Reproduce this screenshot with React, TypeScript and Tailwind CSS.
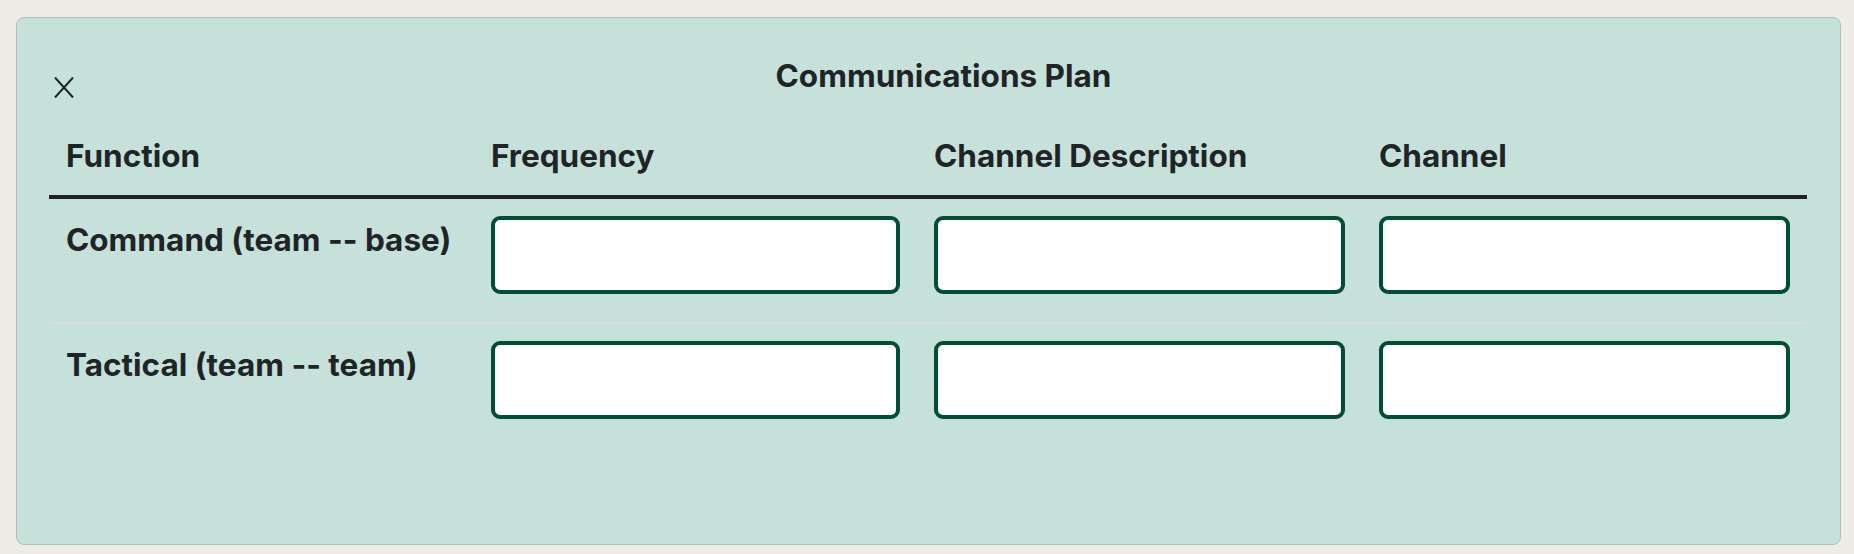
import React from "react";

const rows = ["Command (team -- base)", "Tactical (team -- team)"];
const headers = ["Function", "Frequency", "Channel Description", "Channel"];

function CloseIcon() {
  return (
    <svg width="20" height="21" viewBox="0 0 20 21" fill="none" stroke="#1f2426" strokeWidth="2" strokeLinecap="butt">
      <line x1="1" y1="0.5" x2="19" y2="20.5" />
      <line x1="19" y1="0.5" x2="1" y2="20.5" />
    </svg>
  );
}

function Field() {
  return (
    <input
      type="text"
      className="box-border block w-full h-[78px] border-4 border-[#024d35] rounded-[9px] bg-white outline-none"
    />
  );
}

export default function App() {
  return (
    <div
      className="min-h-[554px] w-[1854px] bg-[#efebe5] pt-[17px] pl-[16px] text-[#1f2426]"
      style={{ fontFamily: "Inter, 'Noto Sans', sans-serif" }}
    >
      <div className="box-border w-[1825px] h-[528px] rounded-[8px] border border-[#a9c3bb] bg-[#c6e1da] pt-[40px] px-[32px]">
        <div className="flex items-start h-[36px]">
          <button className="w-[30px] h-[21px] mt-[19px] flex justify-center">
            <CloseIcon />
          </button>
          <h2 className="flex-1 text-center text-[31.5px] leading-[36px] font-bold">Communications Plan</h2>
        </div>

        <div className="mt-[44px] grid grid-cols-[425px_443px_445px_445px]">
          {headers.map((h) => (
            <div key={h} className="px-[17px] pb-[21px] border-b-4 border-[#1f2222] text-[31.5px] leading-[36px] font-bold">
              {h}
            </div>
          ))}
          {rows.map((r) => (
            <React.Fragment key={r}>
              <div className="px-[17px] pt-[23px] border-b-2 border-[#d5dedb] text-[31.5px] leading-[36px] font-bold">
                {r}
              </div>
              {[0, 1, 2].map((i) => (
                <div key={i} className="px-[17px] pt-[17px] pb-[28px] border-b-2 border-[#d5dedb]">
                  <Field />
                </div>
              ))}
            </React.Fragment>
          ))}
        </div>
      </div>
    </div>
  );
}
